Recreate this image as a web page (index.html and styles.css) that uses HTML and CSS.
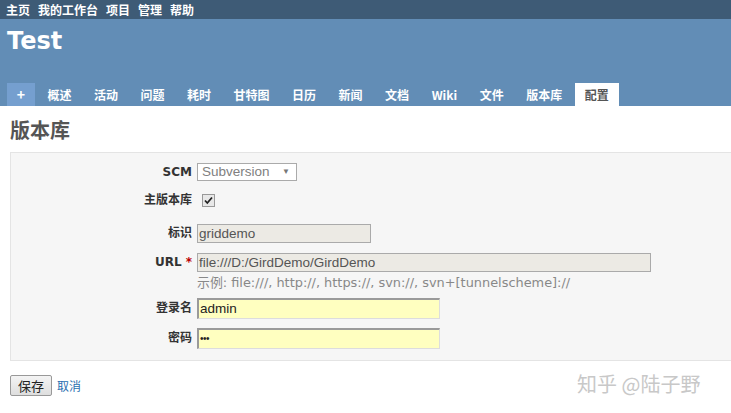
FILE: index.html
```html
<!DOCTYPE html>
<html>
<head>
<meta charset="utf-8">
<link rel="stylesheet" href="styles.css">
</head>
<body>
<div class="top-menu">
  <a>主页</a><a>我的工作台</a><a>项目</a><a>管理</a><a>帮助</a>
</div>
<div class="header">
  <h1 class="title">Test</h1>
  <ul class="main-menu">
    <li><a class="new">+</a></li>
    <li><a>概述</a></li>
    <li><a>活动</a></li>
    <li><a>问题</a></li>
    <li><a>耗时</a></li>
    <li><a>甘特图</a></li>
    <li><a>日历</a></li>
    <li><a>新闻</a></li>
    <li><a>文档</a></li>
    <li><a>Wiki</a></li>
    <li><a>文件</a></li>
    <li><a>版本库</a></li>
    <li><a class="selected">配置</a></li>
  </ul>
</div>
<div class="content">
  <h2 class="page-title">版本库</h2>
  <div class="box">
    <div class="row r-scm">
      <label class="lbl">SCM</label>
      <div class="select">Subversion<span class="arrow">▼</span></div>
    </div>
    <div class="row r-main">
      <label class="lbl">主版本库</label>
      <span class="check"><svg width="11" height="11" viewBox="0 0 11 11"><path d="M2 5.5 L4.3 8 L9 2.5" fill="none" stroke="#222" stroke-width="1.8"/></svg></span>
    </div>
    <div class="row r-ident">
      <label class="lbl">标识</label>
      <div class="input disabled w-ident">griddemo</div>
    </div>
    <div class="row r-url">
      <label class="lbl">URL <span class="req">*</span></label>
      <div class="field">
        <div class="input disabled w-url">file:///D:/GirdDemo/GirdDemo</div>
        <div class="hint">示例: file:///, http://, https://, svn://, svn+[tunnelscheme]://</div>
      </div>
    </div>
    <div class="row r-login">
      <label class="lbl">登录名</label>
      <div class="input yellow w-login">admin</div>
    </div>
    <div class="row r-pass">
      <label class="lbl">密码</label>
      <div class="input yellow w-login pass">•••</div>
    </div>
  </div>
  <div class="actions">
    <button class="btn">保存</button><a class="cancel">取消</a>
    <span class="watermark">知乎 @陆子野</span>
  </div>
</div>
</body>
</html>
```
FILE: styles.css
```css
html, body { margin: 0; padding: 0; }
body {
  width: 731px; height: 413px; overflow: hidden; background: #fff;
  font-family: "DejaVu Sans", "Noto Sans CJK SC", sans-serif;
  color: #333; font-size: 12px;
}
.top-menu {
  background: #3e5b76; height: 19px; display: flex; gap: 8px;
  padding-left: 6px; align-items: center;
}
.top-menu a {
  color: #fff; font-weight: bold; font-size: 12px; line-height: 14px;
  font-family: "Noto Sans CJK SC", sans-serif;
}
.header { background: #628db6; height: 87px; position: relative; }
.title {
  margin: 0; padding: 8px 0 0 7px; color: #fff; font-size: 24px;
  font-family: "DejaVu Sans", sans-serif; font-weight: bold; line-height: 28px;
}
.main-menu {
  position: absolute; left: 7px; bottom: 0; margin: 0; padding: 0;
  list-style: none; display: flex; gap: 2.5px;
}
.main-menu a {
  display: block; padding: 0 10px; height: 23px; line-height: 23px;
  color: #fff; font-weight: bold; font-size: 12px;
  font-family: "Noto Sans CJK SC", sans-serif;
}
.main-menu a.new { background: #759fcf; padding: 0 9px; width: 10px; text-align: center; font-size: 14px; }
.main-menu a.selected { background: #fff; color: #555; }
.content { padding: 0 0 0 10px; }
.page-title {
  margin: 0; padding-top: 12px; height: 34px; line-height: 24px;
  font-size: 20px; color: #555; font-weight: bold;
  font-family: "Noto Sans CJK SC", sans-serif;
}
.box {
  background: #f6f6f6; border: 1px solid #e4e4e4; border-right: none;
  height: 209px; padding-top: 10px; box-sizing: border-box;
}
.row { display: flex; align-items: flex-start; }
.lbl {
  width: 181px; text-align: right; padding-right: 5px; font-weight: bold;
  color: #333; font-size: 12px; line-height: 18px;
  font-family: "DejaVu Sans", "Noto Sans CJK SC", sans-serif;
}
.req { color: #bb0000; }
.select {
  height: 16px; border: 1px solid #aaa; background: #fff;
  color: #808080; font-family: "Liberation Sans", "Noto Sans CJK SC", sans-serif;
  font-size: 13.5px; line-height: 16px; padding-left: 4px; position: relative; box-sizing: content-box;
  width: 94px;
}
.arrow { position: absolute; right: 6px; top: 0; font-size: 8px; color: #777; }
.r-main { margin-top: 10px; }
.check {
  margin-left: 5px; margin-top: 3px; width: 11px; height: 11px;
  border: 1px solid #999; background: #e8e8e8; display: inline-flex;
}
.r-ident { margin-top: 15px; }
.input {
  height: 17px; box-sizing: content-box; font-size: 13.5px; line-height: 17px;
  font-family: "Liberation Sans", "Noto Sans CJK SC", sans-serif; padding-left: 1px;
}
.disabled { background: #eceae4; border: 1px solid #aaa; color: #555; }
.w-ident { width: 171px; }
.w-url { width: 451px; }
.r-url { margin-top: 10px; }
.hint {
  color: #888; font-size: 12.9px; line-height: 16px; margin-top: 3px;
  font-family: "DejaVu Sans", "Noto Sans CJK SC", sans-serif;
}
.yellow {
  background: #ffffc0; color: #222; border-top: 2px solid #9a9a9a; border-left: 2px solid #9a9a9a;
  border-right: 1px solid #ddd; border-bottom: 1px solid #ddd; height: 18px; line-height: 18px;
}
.w-login { width: 239px; }
.r-login { margin-top: 7px; }
.r-login .lbl, .r-pass .lbl { line-height: 20px; }
.r-pass { margin-top: 9px; }
.pass { font-size: 10px; letter-spacing: -0.5px; }
.actions { display: flex; align-items: center; margin-top: 14px; position: relative; }
.btn {
  width: 42px; height: 21px; padding: 0; border: 1px solid #999; border-radius: 2px;
  background: linear-gradient(#f4f4f4, #dedede); font-size: 13px; color: #222;
  font-family: "Noto Sans CJK SC", sans-serif;
}
.cancel { color: #2a6fb0; margin-left: 5px; font-size: 12px; font-family: "Noto Sans CJK SC", sans-serif; }
.watermark {
  position: absolute; left: 567px; top: -6px; color: #c8c8c8; font-size: 20px;
  font-family: "Noto Sans CJK SC", sans-serif;
}
```
